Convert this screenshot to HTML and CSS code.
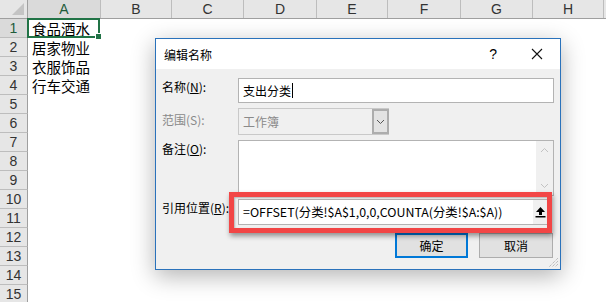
FILE: index.html
```html
<!DOCTYPE html>
<html>
<head>
    <title>编辑名称</title>
    <link rel="stylesheet" href="styles.css">
</head>
<body>
    <div class="sheet">
        <div class="colheads">
            <div class="corner"><span class="tri"></span></div>
            <div class="ch ch-a active">A</div>
            <div class="ch ch-b">B</div>
            <div class="ch ch-c">C</div>
            <div class="ch ch-d">D</div>
            <div class="ch ch-e">E</div>
            <div class="ch ch-f">F</div>
            <div class="ch ch-g">G</div>
            <div class="ch ch-h">H</div>
        </div>
        <div class="row"><div class="rh active">1</div><div class="cell">食品酒水<span class="sel"><span class="handle"></span></span></div></div>
        <div class="row"><div class="rh">2</div><div class="cell">居家物业</div></div>
        <div class="row"><div class="rh">3</div><div class="cell">衣服饰品</div></div>
        <div class="row"><div class="rh">4</div><div class="cell">行车交通</div></div>
        <div class="row"><div class="rh">5</div></div>
        <div class="row"><div class="rh">6</div></div>
        <div class="row"><div class="rh">7</div></div>
        <div class="row"><div class="rh">8</div></div>
        <div class="row"><div class="rh">9</div></div>
        <div class="row"><div class="rh">10</div></div>
        <div class="row"><div class="rh">11</div></div>
        <div class="row"><div class="rh">12</div></div>
        <div class="row"><div class="rh">13</div></div>
        <div class="row"><div class="rh">14</div></div>
        <div class="row"><div class="rh">15</div></div>
    </div>

    <div class="dialog">
        <div class="titlebar">
            <span class="title">编辑名称</span>
            <span class="help">?</span>
            <svg class="close" width="12" height="12" viewBox="0 0 12 12">
                <path d="M1 1 L11 11 M11 1 L1 11" stroke="#111" stroke-width="1.1" fill="none"/>
            </svg>
        </div>
        <div class="body">
            <div class="form">
                <label class="lbl">名称(<u>N</u>):</label>
                <div class="field input">支出分类<span class="caret"></span></div>

                <label class="lbl lbl-scope disabled">范围(S):</label>
                <div class="field select">
                    <span class="select-text">工作簿</span>
                    <span class="dropbtn">
                        <svg width="9" height="6" viewBox="0 0 9 6"><path d="M1 1 L4.5 4.5 L8 1" stroke="#555" fill="none"/></svg>
                    </span>
                </div>

                <label class="lbl">备注(<u>O</u>):</label>
                <div class="field textarea">
                    <span class="vscroll">
                        <svg width="9" height="6" viewBox="0 0 9 6"><path d="M1 5 L4.5 1.5 L8 5" stroke="#c2c2c2" fill="none"/></svg>
                        <svg width="9" height="6" viewBox="0 0 9 6"><path d="M1 1 L4.5 4.5 L8 1" stroke="#c2c2c2" fill="none"/></svg>
                    </span>
                </div>

                <label class="lbl lbl-ref">引用位置(<u>R</u>):</label>
                <div class="field input refers">
                    <span class="formula">=OFFSET(分类!$A$1,0,0,COUNTA(分类!$A:$A))</span>
                    <span class="collapse">
                        <svg width="11" height="12" viewBox="0 0 11 12">
                            <path d="M5.5 1 L10 6 L7 6 L7 9 L4 9 L4 6 L1 6 Z" fill="#000"/>
                            <rect x="0.5" y="10" width="10" height="1.5" fill="#000"/>
                        </svg>
                    </span>
                </div>
            </div>
            <div class="buttons">
                <button class="btn primary">确定</button>
                <button class="btn">取消</button>
            </div>
        </div>
        <div class="highlight"></div>
        <svg class="grip" width="10" height="10" viewBox="0 0 10 10">
            <path d="M9 3 L3 9 M9 6 L6 9 M9 0 L0 9" stroke="#a8a8a8" stroke-width="1" stroke-dasharray="1 1" fill="none"/>
        </svg>
    </div>
</body>
</html>
```

FILE: styles.css
```css
body {
    margin: 0;
    background-color: #fff;
    font-family: "Noto Sans CJK SC", "Noto Sans", sans-serif;
    overflow: hidden;
}

/* spreadsheet */
.sheet {
    width: 606px;
}

.colheads {
    display: flex;
    height: 19px;
    background-color: #e6e6e6;
    border-bottom: 1px solid #9f9f9f;
    box-sizing: border-box;
}

.corner {
    position: relative;
    width: 28px;
    flex-shrink: 0;
    border-right: 1px solid #9f9f9f;
    box-sizing: border-box;
}

.tri {
    position: absolute;
    right: 3px;
    bottom: 3px;
    width: 0;
    height: 0;
    border-left: 12px solid transparent;
    border-bottom: 12px solid #c4c4c4;
}

.ch {
    flex-shrink: 0;
    border-right: 1px solid #bdbdbd;
    box-sizing: border-box;
    text-align: center;
    font-family: "Liberation Sans", Arial, sans-serif;
    font-size: 14px;
    line-height: 19px;
    color: #333;
}

.ch.active {
    background-color: #dadada;
    color: #1e5c3a;
}

.ch-a { width: 73px; }
.ch-b { width: 71px; }
.ch-c { width: 72px; }
.ch-d { width: 73px; }
.ch-e { width: 71px; }
.ch-f { width: 73px; }
.ch-g { width: 72px; }
.ch-h { width: 71px; }

.row {
    display: flex;
    height: 19px;
}

.rh {
    width: 28px;
    flex-shrink: 0;
    background-color: #e6e6e6;
    border-right: 1px solid #9f9f9f;
    border-bottom: 1px solid #bdbdbd;
    box-sizing: border-box;
    text-align: center;
    font-family: "Liberation Sans", Arial, sans-serif;
    font-size: 14px;
    line-height: 19px;
    color: #333;
}

.rh.active {
    background-color: #dadada;
    color: #1e5c3a;
}

.cell {
    position: relative;
    width: 73px;
    padding-left: 4px;
    box-sizing: border-box;
    font-size: 14.5px;
    line-height: 19px;
    color: #000;
    white-space: nowrap;
}

.sel {
    position: absolute;
    left: -1px;
    top: -1px;
    width: 73px;
    height: 20px;
    border: 2px solid #217346;
    box-sizing: border-box;
}

.handle {
    position: absolute;
    right: -4px;
    bottom: -4px;
    width: 5px;
    height: 5px;
    background-color: #217346;
    border: 1px solid #fff;
}

/* dialog */
.dialog {
    position: absolute;
    left: 155px;
    top: 38px;
    width: 406px;
    height: 232px;
    box-sizing: border-box;
    border: 1px solid #2a72bb;
    background-color: #f0f0f0;
    box-shadow: 0 6px 22px rgba(0, 0, 0, 0.3);
    font-size: 12px;
    color: #000;
}

.titlebar {
    display: flex;
    align-items: center;
    height: 30px;
    background-color: #fff;
    padding-left: 8px;
}

.title {
    flex: 1;
    font-size: 12px;
}

.help {
    font-family: "Liberation Sans", Arial, sans-serif;
    font-size: 14px;
    margin-right: 34px;
}

.close {
    margin-right: 17px;
}

.body {
    padding: 9px 6px 11px 6px;
}

.form {
    display: grid;
    grid-template-columns: 76px 1fr;
    grid-template-rows: 25px 27px 56px 26px;
    row-gap: 5px;
}

.lbl {
    align-self: start;
    padding-top: 1px;
    line-height: 16px;
    white-space: nowrap;
}

.lbl-scope {
    padding-top: 4px;
}

.lbl.disabled {
    color: #8a8a8a;
}

.lbl-ref {
    margin-top: -2px;
}

.field {
    position: relative;
    box-sizing: border-box;
    border: 1px solid #b3b3b3;
    background-color: #fff;
}

.input {
    display: flex;
    align-items: center;
    padding-left: 4px;
}

.caret {
    display: inline-block;
    width: 1px;
    height: 15px;
    background-color: #000;
    margin-left: 1px;
}

.select {
    width: 151px;
    display: flex;
    align-items: center;
    background-color: #f0f0f0;
    border-color: #c9c9c9;
}

.select-text {
    flex: 1;
    padding-left: 4px;
    color: #8a8a8a;
}

.dropbtn {
    display: flex;
    align-items: center;
    justify-content: center;
    width: 17px;
    height: 100%;
    box-sizing: border-box;
    border: 2px solid #adadad;
    background-color: #e3e3e3;
    margin-right: -1px;
}

.textarea {
    display: flex;
    justify-content: flex-end;
}

.vscroll {
    display: flex;
    flex-direction: column;
    justify-content: space-between;
    align-items: center;
    width: 17px;
    padding: 6px 0;
    box-sizing: border-box;
    background-color: #f0f0f0;
}

.refers {
    margin-top: -2px;
    margin-right: 6px;
    height: 26px;
    padding-left: 4px;
}

.formula {
    flex: 1;
    font-size: 12.4px;
    white-space: nowrap;
}

.collapse {
    display: flex;
    align-items: center;
    justify-content: center;
    width: 14px;
    height: 24px;
    background-color: #f0f0f0;
}

.buttons {
    display: flex;
    justify-content: flex-end;
    gap: 11px;
    margin-top: 6px;
    padding-right: 1px;
}

.btn {
    height: 25px;
    width: 74px;
    box-sizing: border-box;
    border: 1px solid #adadad;
    background-color: #e1e1e1;
    font-family: "Noto Sans CJK SC", "Noto Sans", sans-serif;
    font-size: 12px;
    color: #000;
    padding: 0;
}

.btn.primary {
    width: 73px;
    border: 2px solid #0078d7;
}

.highlight {
    position: absolute;
    left: 73px;
    top: 153px;
    width: 323px;
    height: 41px;
    box-sizing: border-box;
    border: 5px solid #f24646;
    box-shadow: 1px 3px 5px rgba(0, 0, 0, 0.4), inset 1px 1px 2px rgba(0, 0, 0, 0.25);
}

.grip {
    position: absolute;
    right: 1px;
    bottom: 1px;
}
```
